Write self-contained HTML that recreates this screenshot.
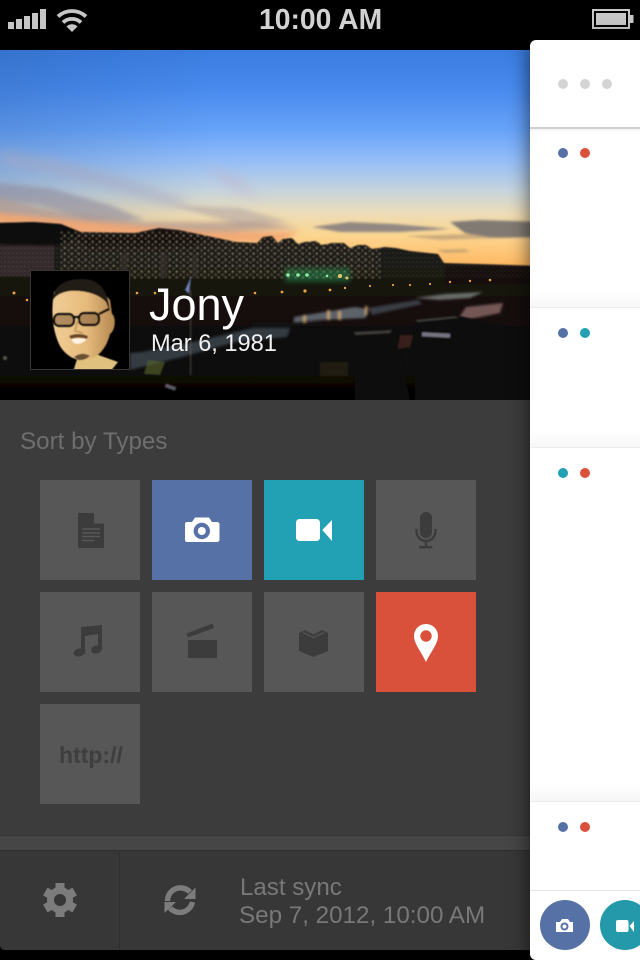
<!DOCTYPE html>
<html><head><meta charset="utf-8"><title>Jony</title>
<style>
html,body{margin:0;padding:0;background:#000;}
body{width:640px;height:960px;position:relative;overflow:hidden;font-family:"Liberation Sans",sans-serif;}
.abs,svg{position:absolute;}
.t{position:absolute;white-space:nowrap;line-height:1;}
#left{position:absolute;left:0;top:50px;width:560px;height:900px;background:#3c3c3c;border-radius:0 0 0 5px;overflow:hidden;}
.tile{position:absolute;width:100px;height:100px;background:#575757;}
.dot{position:absolute;width:10px;height:10px;border-radius:50%;}
.sep{position:absolute;left:0;width:110px;height:16px;background:linear-gradient(#fff,#f7f7f7);border-bottom:1px solid #ececec;}
#panel{position:absolute;left:530px;top:40px;width:110px;height:920px;background:#fff;border-radius:6px 0 0 6px;box-shadow:0 0 20px rgba(0,0,0,.65);overflow:hidden;}
</style></head>
<body>

<!-- status bar -->
<svg style="left:0;top:0" width="640" height="50" viewBox="0 0 640 50">
<g fill="#c6c6c6">
<rect x="8" y="22" width="6" height="7"/><rect x="16" y="19" width="6" height="10"/><rect x="24" y="16" width="6" height="13"/><rect x="32" y="13" width="6" height="16"/><rect x="40" y="9" width="6" height="20"/>
<path d="M72 32l-5.500-5.500a8 8 0 0 1 11 0z"/>
</g>
<g fill="none" stroke="#c6c6c6" stroke-width="3.800">
<path d="M63 22.500a13 13 0 0 1 18 0"/>
<path d="M58 16.500a20.500 20.500 0 0 1 28 0"/>
</g>
<rect x="593" y="10" width="36" height="18" fill="none" stroke="#c8c8c8" stroke-width="2"/>
<rect x="596" y="13" width="30" height="12" fill="#c8c8c8"/>
<rect x="630" y="15" width="3.500" height="8" fill="#c8c8c8"/>
</svg>
<div class="t" style="left:259px;top:5px;font-size:28.300px;font-weight:bold;color:#d2d2d2;">10:00 AM</div>

<div id="left">
<div class="abs" style="left:0;top:785px;width:560px;height:1px;background:#363636"></div>
<div class="abs" style="left:0;top:786px;width:560px;height:14px;background:#464646"></div>
<div class="abs" style="left:0;top:800px;width:560px;height:100px;background:#373737;border-top:1px solid #2f2f2f;box-sizing:border-box"></div>
<div class="abs" style="left:119px;top:801px;width:1px;height:99px;background:#2f2f2f"></div>
</div>

<!-- photo -->
<svg style="left:0;top:50px" width="530" height="350" viewBox="0 50 530 350">
<defs>
<linearGradient id="sky" x1="0" y1="50" x2="0" y2="270" gradientUnits="userSpaceOnUse">
<stop offset="0" stop-color="#3a7cdf"/><stop offset=".18" stop-color="#488aee"/><stop offset=".36" stop-color="#66a2f8"/><stop offset=".5" stop-color="#93bdf7"/><stop offset=".64" stop-color="#c6d4dd"/><stop offset=".74" stop-color="#ecdcb8"/><stop offset=".84" stop-color="#fcd690"/><stop offset="1" stop-color="#ffb45c"/>
</linearGradient>
<linearGradient id="edgeL" x1="0" y1="0" x2="1" y2="0"><stop offset="0" stop-color="#24508f" stop-opacity=".22"/><stop offset=".4" stop-color="#24508f" stop-opacity="0"/></linearGradient>
<linearGradient id="ground" x1="0" y1="240" x2="0" y2="400" gradientUnits="userSpaceOnUse">
<stop offset="0" stop-color="#1a1817"/><stop offset=".25" stop-color="#17130f"/><stop offset=".6" stop-color="#100d0a"/><stop offset="1" stop-color="#040404"/>
</linearGradient>
<filter id="soft" x="-5%" y="-5%" width="110%" height="110%"><feGaussianBlur stdDeviation=".7"/></filter>
<filter id="b1" x="-20%" y="-60%" width="140%" height="220%"><feGaussianBlur stdDeviation="2.500"/></filter>
<filter id="b2" x="-20%" y="-60%" width="140%" height="220%"><feGaussianBlur stdDeviation="1.200"/></filter>
<filter id="b4" x="-50%" y="-80%" width="200%" height="260%"><feGaussianBlur stdDeviation="5"/></filter>
<filter id="av" x="-10%" y="-10%" width="120%" height="120%"><feGaussianBlur stdDeviation=".5"/></filter>
<pattern id="win" width="4" height="4.500" patternUnits="userSpaceOnUse"><rect x=".3" y=".3" width="1.300" height="1.200" fill="#efe6b4"/><rect x="2.500" y="2.500" width="1" height="1" fill="#d6deb8" opacity=".6"/></pattern>
<pattern id="win2" width="7" height="6" patternUnits="userSpaceOnUse"><rect x="1" y="1" width="1.500" height="1.500" fill="#fff4c8"/><rect x="5" y="4" width="1.200" height="1.200" fill="#ffe9a8"/></pattern>
<clipPath id="city"><path d="M0 223L34 222L61 224L81 232L135 233L159 228L179 230L203 235L236 242L257 243L263 237L272 236L278 243L283 239L292 238L298 244L305 242L316 241L322 245L332 243L344 243L350 248L358 245L366 245L372 249L385 247L396 248L410 251L438 254L444 263L530 266V284H0z"/></clipPath>
</defs>
<rect x="-20" y="30" width="570" height="260" fill="url(#sky)"/>
<rect x="0" y="50" width="530" height="190" fill="url(#edgeL)"/>
<g filter="url(#b4)" opacity=".55">
<path d="M0 150L60 160L130 180L190 202L170 206L100 186L40 172L0 165z" fill="#a4a8c2"/>
<path d="M200 160L240 178L262 200L230 190z" fill="#c0b0cc" opacity=".7"/>
</g>
<g filter="url(#b1)">
<path d="M-10 182L50 188L110 205L145 220L90 220L40 205L-10 198z" fill="#8d8b9f" opacity=".6"/>
<path d="M-10 196L60 212L140 222L260 222L300 228L200 234L90 228L-10 218z" fill="#ae9690" opacity=".7"/>
<path d="M170 205L240 208L290 222L240 225z" fill="#a0929e" opacity=".45"/>
<path d="M-10 212L90 222L210 232L300 232L280 242L140 242L-10 228z" fill="#f2a672" opacity=".9"/>
</g>
<g filter="url(#b2)">
<path d="M312 227L350 222L395 224L450 229L400 232L340 232z" fill="#867f7e" opacity=".9"/>
<path d="M450 222L480 220L545 222V237L490 238L465 233z" fill="#74706f" opacity=".9"/>
<path d="M405 236L470 234L500 238L440 240z" fill="#b79a78" opacity=".7"/>
<path d="M436 250L465 249L470 252L445 253z" fill="#a8906c" opacity=".6"/>
</g>

<g filter="url(#soft)">
<path d="M-10 223L34 222L61 224L81 232L135 233L159 228L179 230L203 235L236 242L257 243L263 237L272 236L278 243L283 239L292 238L298 244L305 242L316 241L322 245L332 243L344 243L350 248L358 245L366 245L372 249L385 247L396 248L410 251L438 254L444 263L545 266V410H-10z" fill="url(#ground)"/>
<g clip-path="url(#city)">
<path d="M0 222L34 222L61 224L81 234L60 246L0 244z" fill="#0f0d0d"/>
<path d="M75 236L135 235L159 230L179 232L203 238L190 250L90 250z" fill="#131110"/>
<rect x="0" y="246" width="54" height="30" fill="#33262a"/>
<rect x="0" y="244" width="530" height="34" fill="url(#win)" opacity=".18"/>
<rect x="60" y="232" width="320" height="46" fill="url(#win2)" opacity=".45"/>
<rect x="120" y="254" width="8" height="24" fill="#3a3530" opacity=".6"/>
<rect x="160" y="254" width="7" height="24" fill="#3a3530" opacity=".6"/>
<rect x="192" y="254" width="6" height="24" fill="#3a3530" opacity=".5"/>
<rect x="445" y="266" width="85" height="18" fill="#0b0a0a" opacity=".35"/>
</g>
</g>
<rect x="285" y="268" width="65" height="14" fill="#2aa860" opacity=".4" filter="url(#b1)"/>
<g fill="#8af0a8"><circle cx="288" cy="275" r="1.800"/><circle cx="298" cy="275" r="1.800"/><circle cx="307" cy="275" r="1.800"/><circle cx="327" cy="276" r="1.300"/></g>
<g fill="#e8c870"><circle cx="340" cy="276" r="2"/><circle cx="347" cy="278" r="1.500"/></g>
<g fill="#eea040">
<circle cx="14" cy="293" r="1.500"/><circle cx="137" cy="293" r="1.300"/><circle cx="155" cy="293" r="1.300"/><circle cx="255" cy="293" r="1.300"/><circle cx="282" cy="292" r="1.400"/><circle cx="305" cy="291" r="1.600"/><circle cx="330" cy="290" r="1.400"/><circle cx="345" cy="288" r="1.200"/><circle cx="370" cy="286" r="1.100"/><circle cx="393" cy="285" r="1.100"/><circle cx="410" cy="285" r="1.100"/><circle cx="430" cy="284" r="1.100"/><circle cx="450" cy="282" r="1.200"/><circle cx="470" cy="281" r="1.200"/><circle cx="490" cy="280" r="1.300"/><circle cx="27" cy="300" r="1.300"/>
</g>

<g filter="url(#b2)">
<path d="M130 353L142 352L189 343L253 328L290 328L287 337L236 342L182 357L130 370z" fill="#4a5460" opacity=".65"/>
<path d="M294 317L355 307L368 309L366 318L320 320L294 322z" fill="#6e7880" opacity=".8"/>
<path d="M368 308L418 300L422 304L372 315z" fill="#4a525c" opacity=".7"/>
<path d="M415 298L445 294L483 292L470 298L440 300z" fill="#7c827e" opacity=".8"/>
<path d="M466 307L503 303L500 313L456 322z" fill="#93706c" opacity=".75"/>
<path d="M327 310h3v10h-3zM338 311h3v9h-3zM365 306h2.500v9h-2.500zM303 315h3v8h-3z" fill="#d8ae70" opacity=".8"/>
<rect x="252" y="322" width="70" height="4" fill="#0d0b0a" opacity=".8"/>
</g>
<g filter="url(#soft)">
<path d="M355 332L395 330L410 400H355z" fill="#0c0b0a"/>
<path d="M415 320L460 316L545 335V410H415z" fill="#0e0d0c"/>
<path d="M353 332L392 330L390 333L356 335z" fill="#45443f" opacity=".85"/>
<path d="M415 320L455 316L458 318L418 322z" fill="#45433f" opacity=".8"/>
<rect x="422" y="333" width="28" height="4" fill="#9fa0b2" opacity=".7" transform="rotate(3 436 335)"/>
<path d="M400 335L413 335L410 347L398 349z" fill="#6a352c" opacity=".45"/>
<path d="M320 362h28v14h-28z" fill="#2e2518" opacity=".55"/>
<path d="M148 360L165 362L160 375L144 374z" fill="#55622a" opacity=".65"/>
<rect x="165" y="385" width="11" height="4" fill="#8f919c" opacity=".6" transform="rotate(20 170 387)"/>
<circle cx="5" cy="358" r="2" fill="#8f9a88" opacity=".55"/>
<path d="M191 277l-2 17-4-4z" fill="#6c80b8"/>
<rect x="190" y="290" width="1.200" height="85" fill="#6e6a5e" opacity=".55"/>
</g>

<!-- avatar -->
<rect x="30.500" y="270.500" width="99" height="99" fill="#000" stroke="#3a3530"/>
<clipPath id="avc"><rect x="31" y="271" width="98" height="98"/></clipPath>
<linearGradient id="skin" x1="0" y1="0" x2="1" y2="0"><stop offset="0" stop-color="#f0cd96"/><stop offset=".55" stop-color="#e6bb7c"/><stop offset="1" stop-color="#b48850"/></linearGradient>
<g clip-path="url(#avc)"><g filter="url(#av)">
<path d="M90 352L118 362L110 372H73L78 356z" fill="#e0c27e"/>
<path d="M54 292C51 310 52 330 60 346C66 356 76 361 84 360C96 360 106 350 110 334C116 330 116 316 112 314L110 300C100 286 66 282 54 292z" fill="url(#skin)"/>
<path d="M53 300C53 285 66 279 82 279C98 279 108 288 110 312L106 302C98 293 82 290 70 291C62 292 56 295 53 300z" fill="#221a14"/>
<g fill="#7c5a36" fill-opacity=".55" stroke="#0d0a08" stroke-width="2.400">
<rect x="54" y="314" width="20" height="12" rx="5"/>
<rect x="79" y="313" width="20" height="12" rx="5"/>
</g>
<path d="M74 317L79 317M99 314L109 309" stroke="#0d0a08" stroke-width="2.400" fill="none"/>
<path d="M69 336Q78 332 88 336L87 339Q78 336 71 339z" fill="#6a4526"/>
<path d="M71 339Q79 338 87 339Q80 346 74 343z" fill="#fff4e6"/>
<path d="M74 357Q82 351 90 356Q84 361 78 360z" fill="#4a3520" opacity=".8"/>
<path d="M78 320L75 331L83 333" fill="none" stroke="#c09458" stroke-width="1.500"/>
</g></g>
</svg>
<div class="t" style="left:149px;top:282px;font-size:45px;color:#fff;">Jony</div>
<div class="t" style="left:151px;top:333px;font-size:23.600px;color:#f2f2f2;">Mar 6, 1981</div>

<!-- sort -->
<div class="t" style="left:20px;top:430px;font-size:24.200px;color:#6e6e6e;">Sort by Types</div>
<div class="tile" style="left:40px;top:480px"></div>
<div class="tile" style="left:152px;top:480px;background:#5671a6"></div>
<div class="tile" style="left:264px;top:480px;background:#22a0b4"></div>
<div class="tile" style="left:376px;top:480px"></div>
<div class="tile" style="left:40px;top:592px"></div>
<div class="tile" style="left:152px;top:592px"></div>
<div class="tile" style="left:264px;top:592px"></div>
<div class="tile" style="left:376px;top:592px;background:#d9503b"></div>
<div class="tile" style="left:40px;top:704px"></div>
<div class="t" style="left:59px;top:744px;font-size:23px;font-weight:bold;color:#3e3e3e;">http://</div>

<!-- tile icons -->
<svg style="left:0;top:0" width="640" height="960" viewBox="0 0 640 960">
<path d="M78 513H93L104 524V548H78z" fill="#3c3c3c"/>
<path d="M94 513L104 523.500H94z" fill="#575757"/>
<path d="M82 529H100M82 533H100M82 536.500H100M82 540.500H94" stroke="#575757" stroke-width="1.500" fill="none"/>
<path d="M187 522H192L195 517.500H209L212 522H217Q219.500 522 219.500 524.500V539.500Q219.500 542 217 542H187Q185 542 185 539.500V524.500Q185 522 187 522z" fill="#fff"/>
<circle cx="201.800" cy="531" r="8.200" fill="#5671a6"/><circle cx="201.800" cy="531" r="4" fill="#fff"/>
<rect x="296" y="519" width="24" height="22" rx="3.500" fill="#fff"/>
<path d="M322.300 530L332 520V541z" fill="#fff"/>
<rect x="420" y="512" width="12" height="26" rx="6" fill="#3c3c3c"/>
<path d="M416.500 529V531A9.500 10 0 0 0 435.500 531V529" fill="none" stroke="#3c3c3c" stroke-width="2.400"/>
<rect x="424.800" y="540" width="2.400" height="7" fill="#3c3c3c"/>
<rect x="419" y="546" width="13.500" height="2.500" rx="1" fill="#3c3c3c"/>
<path d="M81 627L102 625V650H98V634L85 636V654H81z" fill="#3c3c3c"/>
<ellipse cx="79" cy="652.500" rx="5.500" ry="4" fill="#3c3c3c" transform="rotate(-15 79 652.500)"/>
<ellipse cx="96.500" cy="649.500" rx="5.500" ry="4" fill="#3c3c3c" transform="rotate(-15 96.500 649.500)"/>
<rect x="188" y="640" width="29" height="18" fill="#3c3c3c"/>
<path d="M186.500 633.500L212.500 623.500L214 628L188 637.500z" fill="#3c3c3c"/>
<path d="M299 633L305 630L313.500 634.500L322 630L328 633V651L313.500 657L299 651z" fill="#3c3c3c"/>
<path d="M303 632.500L313.500 637.500L324 632.500" fill="none" stroke="#575757" stroke-width="1.200"/>
<path d="M426 624A12 12 0 0 1 438 636C438 644 430 653 426 662C422 653 414 644 414 636A12 12 0 0 1 426 624z" fill="#fff"/>
<circle cx="426" cy="636" r="5.700" fill="#d9503b"/>
</svg>

<!-- footer content -->
<svg style="left:0;top:0" width="640" height="960" viewBox="0 0 640 960">
<g fill="#7c7c7c">
<circle cx="60" cy="900" r="13"/>
<rect x="55.500" y="883" width="9" height="34"/>
<rect x="55.500" y="883" width="9" height="34" transform="rotate(60 60 900)"/>
<rect x="55.500" y="883" width="9" height="34" transform="rotate(120 60 900)"/>
</g>
<circle cx="60" cy="900" r="6" fill="#373737"/>
<g fill="none" stroke="#7c7c7c" stroke-width="5.400">
<path d="M167.500 901A13 13 0 0 1 190 892"/>
<path d="M192.500 902A13 13 0 0 1 170 908"/>
</g>
<g fill="#7c7c7c">
<path d="M195.500 887.500V899H184z"/>
<path d="M164.500 913V902H176z"/>
</g>
</svg>
<div class="t" style="left:240px;top:876px;font-size:24.100px;color:#787878;">Last sync</div>
<div class="t" style="left:239px;top:904px;font-size:24.200px;color:#787878;">Sep 7, 2012, 10:00 AM</div>

<!-- right panel -->
<div id="panel">
<div class="abs" style="left:0;top:87px;width:110px;height:2px;background:#d0d0d0"></div>
<div class="abs" style="left:0;top:89px;width:110px;height:3px;background:linear-gradient(#f0f0f0,#fff)"></div>
<div class="dot" style="left:28px;top:39px;background:#d4d4d4"></div>
<div class="dot" style="left:50px;top:39px;background:#d4d4d4"></div>
<div class="dot" style="left:72px;top:39px;background:#d4d4d4"></div>

<div class="dot" style="left:28px;top:108px;background:#5671a6"></div>
<div class="dot" style="left:50px;top:108px;background:#d9503b"></div>
<div class="sep" style="top:251px"></div>
<div class="dot" style="left:28px;top:288px;background:#5671a6"></div>
<div class="dot" style="left:50px;top:288px;background:#22a0b4"></div>
<div class="sep" style="top:391px"></div>
<div class="dot" style="left:28px;top:428px;background:#22a0b4"></div>
<div class="dot" style="left:50px;top:428px;background:#d9503b"></div>
<div class="sep" style="top:745px"></div>
<div class="dot" style="left:28px;top:782px;background:#5671a6"></div>
<div class="dot" style="left:50px;top:782px;background:#d9503b"></div>
<div class="abs" style="left:0;top:850px;width:110px;height:1px;background:#e4e4e4"></div>
<svg style="left:0;top:850px" width="110" height="70" viewBox="530 890 110 70">
<circle cx="565" cy="925" r="25" fill="#5671a6"/>
<circle cx="625" cy="925" r="25" fill="#2499a9"/>
<path d="M557 922H560L562 919H568L570 922H573V932H556V922z" fill="#fff"/>
<circle cx="564.500" cy="926.500" r="4" fill="#5671a6"/><circle cx="564.500" cy="926.500" r="2" fill="#fff"/>
<rect x="616" y="920" width="12.500" height="12" rx="2" fill="#fff"/>
<path d="M629.500 926L634 921V932z" fill="#fff"/>
</svg>
</div>
</body></html>
